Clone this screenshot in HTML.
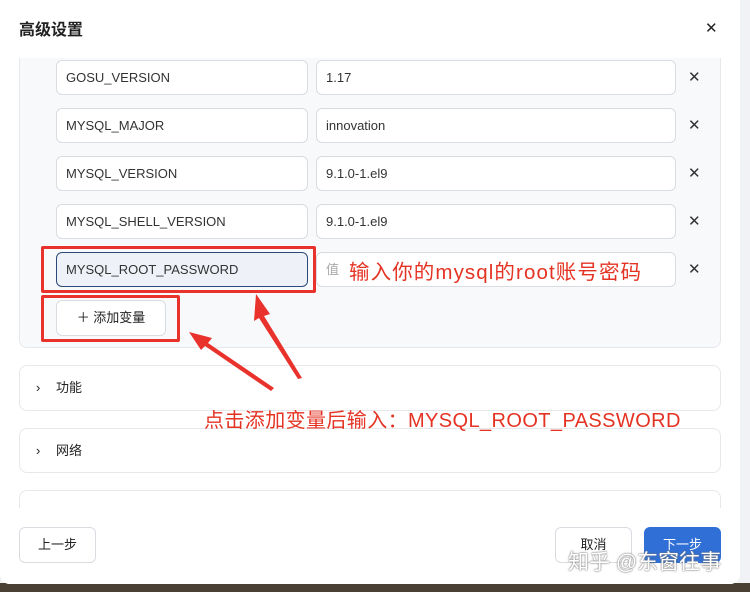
<!DOCTYPE html><html><head><meta charset="utf-8"><style>
*{box-sizing:border-box;margin:0;padding:0}
body{width:750px;height:592px;position:relative;overflow:hidden;background:#f0f2f5;font-family:"Liberation Sans","Noto Sans CJK SC",sans-serif;color:#222}
.bg{position:absolute;left:0;top:583px;width:750px;height:9px;background:#4a4034}
.dlg{position:absolute;left:0;top:0;width:740px;height:584px;background:#fff;border-radius:0 0 10px 10px;overflow:hidden}
.t{position:absolute;left:19px;top:16px;font-size:16px;font-weight:bold}
.cl{position:absolute;left:705px;top:19px;font-size:15px}
.panel{position:absolute;left:19px;top:30px;width:702px;height:318px;background:#f8f9fb;border:1px solid #e6e8ec;border-radius:8px}
.in{position:absolute;height:35px;border:1px solid #d9dce1;border-radius:6px;background:#fff;font-size:13px;padding-left:9px;line-height:33px;color:#333}
.x{position:absolute;left:688px;font-size:15px;color:#333}
.btn{position:absolute;border:1px solid #d9dce1;border-radius:6px;background:#fff;font-size:13px;text-align:center}
.acc{position:absolute;left:19px;width:702px;border:1px solid #e6e8ec;border-radius:8px;background:#fff;font-size:13px;padding-left:36px}
.acc span{position:absolute;left:16px;font-size:13px}
.red{position:absolute;border:3px solid #e8322b;border-radius:2px}
.ann{position:absolute;color:#e53323;font-size:20px;white-space:nowrap}
</style></head><body>
<div class="bg"></div>
<div class="dlg">
<div class="panel"></div>
<div style="position:absolute;left:0;top:0;width:740px;height:58px;background:#fff"></div>
<div class="t">高级设置</div><div class="cl">✕</div>
<div class="in" style="left:56px;top:60px;width:252px">GOSU_VERSION</div><div class="in" style="left:316px;top:60px;width:360px">1.17</div><div class="x" style="top:68px">✕</div>
<div class="in" style="left:56px;top:108px;width:252px">MYSQL_MAJOR</div><div class="in" style="left:316px;top:108px;width:360px">innovation</div><div class="x" style="top:116px">✕</div>
<div class="in" style="left:56px;top:156px;width:252px">MYSQL_VERSION</div><div class="in" style="left:316px;top:156px;width:360px">9.1.0-1.el9</div><div class="x" style="top:164px">✕</div>
<div class="in" style="left:56px;top:204px;width:252px">MYSQL_SHELL_VERSION</div><div class="in" style="left:316px;top:204px;width:360px">9.1.0-1.el9</div><div class="x" style="top:212px">✕</div>
<div class="in" style="left:56px;top:252px;width:252px;background:#eef2f8;border-color:#2b4a7a">MYSQL_ROOT_PASSWORD</div><div class="in" style="left:316px;top:252px;width:360px;color:#aaa">值</div><div class="x" style="top:260px">✕</div>
<div class="btn" style="left:56px;top:300px;width:110px;height:36px;line-height:34px">＋ 添加变量</div>
<div class="acc" style="top:365px;height:46px;line-height:44px"><span>›</span>功能</div>
<div class="acc" style="top:428px;height:45px;line-height:43px"><span>›</span>网络</div>
<div class="acc" style="top:490px;height:40px"></div>
<div style="position:absolute;left:0;top:508px;width:740px;height:80px;background:#fff"></div>
<div class="btn" style="left:19px;top:527px;width:77px;height:36px;line-height:34px">上一步</div>
<div class="btn" style="left:555px;top:527px;width:77px;height:36px;line-height:34px">取消</div>
<div class="btn" style="left:644px;top:527px;width:77px;height:36px;line-height:34px;background:#2f6fd6;border-color:#2f6fd6;color:#fff">下一步</div>
<div style="position:absolute;left:568px;top:546px;font-size:21px;color:#fff;text-shadow:0 0 2px #777,0 0 1px #777;white-space:nowrap">知乎 @东窗往事</div>
</div>
<div class="red" style="left:41px;top:246px;width:275px;height:47px"></div>
<div class="red" style="left:41px;top:295px;width:139px;height:47px"></div>
<div class="ann" style="left:349px;top:255px;font-size:20.5px;letter-spacing:1.1px">输入你的mysql的root账号密码</div>
<div class="ann" style="left:204px;top:404px;letter-spacing:0.4px">点击添加变量后输入：MYSQL_ROOT_PASSWORD</div>
<svg style="position:absolute;left:0;top:0" width="750" height="592">
<polygon points="256,294 270,314 264,316 302,378 298,379 259,318 254,321" fill="#e8322b"/>
<polygon points="189,332 212,338 208,343 274,388 271,391 205,346 201,350" fill="#e8322b"/>
</svg>
</body></html>
